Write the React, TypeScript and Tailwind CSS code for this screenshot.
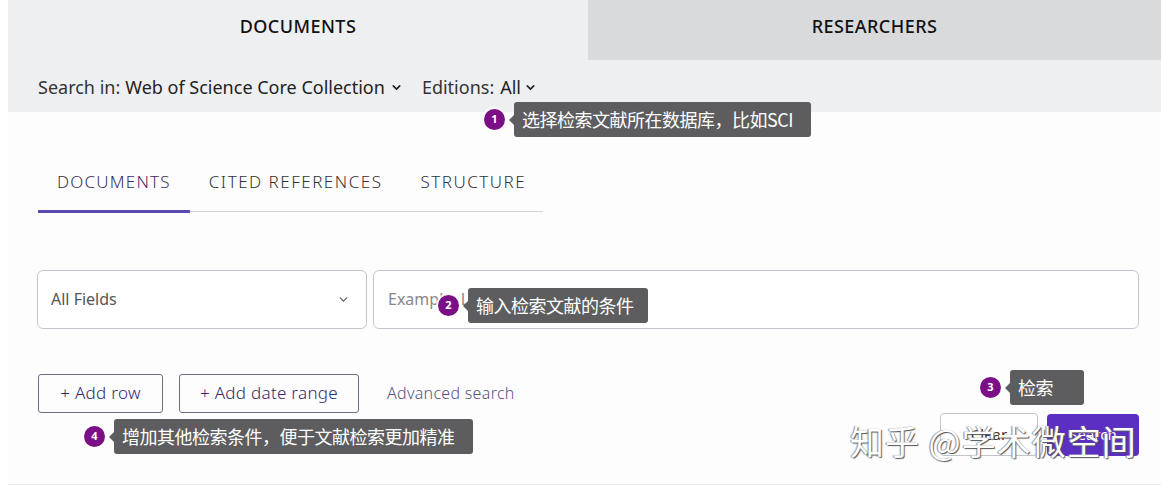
import { ChevronDown } from 'lucide-react'

const font = "font-['Noto_Sans','Noto_Sans_CJK_SC',sans-serif]"

function Badge({ n }: { n: number }) {
  return (
    <div className="w-[21px] h-[21px] rounded-full bg-[#7b0f86] ring-2 ring-white/80 text-white text-[11px] font-bold flex items-center justify-center">
      {n}
    </div>
  )
}

function Tip({ n, text, className, pad = 'pr-[18px]' }: { n: number; text: string; className: string; pad?: string }) {
  return (
    <div className={`absolute flex items-center gap-[9px] ${className}`}>
      <Badge n={n} />
      <div className={`relative h-[35px] bg-[#5d5d5f] rounded-[3px] pl-[8px] ${pad} flex items-center whitespace-nowrap text-white text-[18px] font-['Noto_Sans_CJK_SC',sans-serif] tracking-[-0.5px]`}>
        <div className="absolute -left-[5px] top-1/2 -translate-y-1/2 w-0 h-0 border-y-[5px] border-y-transparent border-r-[5px] border-r-[#5d5d5f]" />
        {text}
      </div>
    </div>
  )
}

export default function App() {
  return (
    <div className={`relative w-[1164px] h-[492px] overflow-hidden bg-white pl-2 pr-[3px] ${font}`}>
      {/* Top band */}
      <div className="bg-[#eeeff1]">
        <div className="flex h-[60px]">
          <div className="flex-1 flex justify-center pt-[13px] text-[18px] font-medium text-[#111] tracking-wide">DOCUMENTS</div>
          <div className="w-[573px] bg-[#d9dadc] flex justify-center pt-[13px] text-[18px] font-medium text-[#111] tracking-wide">RESEARCHERS</div>
        </div>
        <div className="h-[52px] flex items-center pl-[30px] pt-[3px] text-[18px] text-[#222]">
          <span className="text-[#333]">Search in:</span>
          <span className="ml-[5px]">Web of Science Core Collection</span>
          <ChevronDown size={13} strokeWidth={3} className="ml-[5px]" />
          <span className="ml-[19px] text-[#333]">Editions:</span>
          <span className="ml-[6px]">All</span>
          <ChevronDown size={13} strokeWidth={3} className="ml-[3px]" />
        </div>
      </div>

      {/* Body */}
      <div className="h-[373px] bg-[#fdfdfe] border-b border-[#ececee] pl-[30px] pr-[22px]">
        {/* Sub tabs */}
        <div className="pt-[57px] w-[505px]">
          <div className="flex border-b border-[#d4d4d8] whitespace-nowrap">
            <div className="shrink-0 px-[19px] pb-[15px] text-[17px] font-light text-[#3a2d5c] tracking-[1.2px] border-b-[3px] border-[#5b4bb0] -mb-[2px]">DOCUMENTS</div>
            <div className="shrink-0 px-[19px] pb-[15px] text-[17px] font-light text-[#333] tracking-[1.5px]">CITED REFERENCES</div>
            <div className="shrink-0 px-[19px] pb-[15px] text-[17px] font-light text-[#333] tracking-[1.5px]">STRUCTURE</div>
          </div>
        </div>

        {/* Inputs */}
        <div className="flex gap-[6px] mt-[58px]">
          <div className="w-[330px] h-[59px] -ml-px border border-[#c4c4cc] rounded-[6px] bg-white flex items-center justify-between pl-[13px] pr-[16px] text-[16px] text-[#555]">
            <span>All Fields</span>
            <ChevronDown size={13} strokeWidth={2} className="text-[#555]" />
          </div>
          <div className="flex-1 h-[59px] border border-[#c4c4cc] rounded-[6px] bg-white flex items-center pl-[14px] text-[16px] text-[#888]">
            Example: Liu W or Liu Wei
          </div>
        </div>

        {/* Buttons */}
        <div className="flex items-center gap-[16px] mt-[45px]">
          <div className="w-[125px] h-[39px] border border-[#6e6c86] rounded-[3px] flex items-center justify-center text-[17px] font-light tracking-[0.3px] text-[#32296a]">+ Add row</div>
          <div className="w-[180px] h-[39px] border border-[#6e6c86] rounded-[3px] flex items-center justify-center text-[17px] font-light tracking-[0.3px] text-[#32296a]">+ Add date range</div>
          <div className="ml-[12px] text-[16px] font-light tracking-[0.3px] text-[#56557f]">Advanced search</div>
        </div>

        <div className="flex justify-end gap-[9px]">
          <div className="w-[98px] h-[43px] border border-[#c4c4cc] rounded-[4px] bg-white flex items-center justify-center text-[15px] text-[#333]">Clear</div>
          <div className="w-[92px] h-[42px] mt-[1px] bg-[#5a2fc2] rounded-[4px] flex items-center justify-center text-[15px] text-white">Search</div>
        </div>
      </div>

      {/* Annotations */}
      <Tip n={1} text="选择检索文献所在数据库，比如SCI" className="left-[484px] top-[102px]" />
      <Tip n={2} text="输入检索文献的条件" className="left-[438px] top-[288px]" pad="pr-[14px]" />
      <Tip n={3} text="检索" className="left-[980px] top-[370px]" pad="pr-[31px]" />
      <Tip n={4} text="增加其他检索条件，便于文献检索更加精准" className="left-[84px] top-[419px]" />

      <div className="absolute left-[850px] top-[418px] text-[34px] leading-[46px] tracking-[1px] whitespace-nowrap text-white font-['Noto_Sans_CJK_SC',sans-serif] [text-shadow:1px_1px_1px_#555,-1px_0_1px_#888]">
        知乎 @学术微空间
      </div>
    </div>
  )
}
